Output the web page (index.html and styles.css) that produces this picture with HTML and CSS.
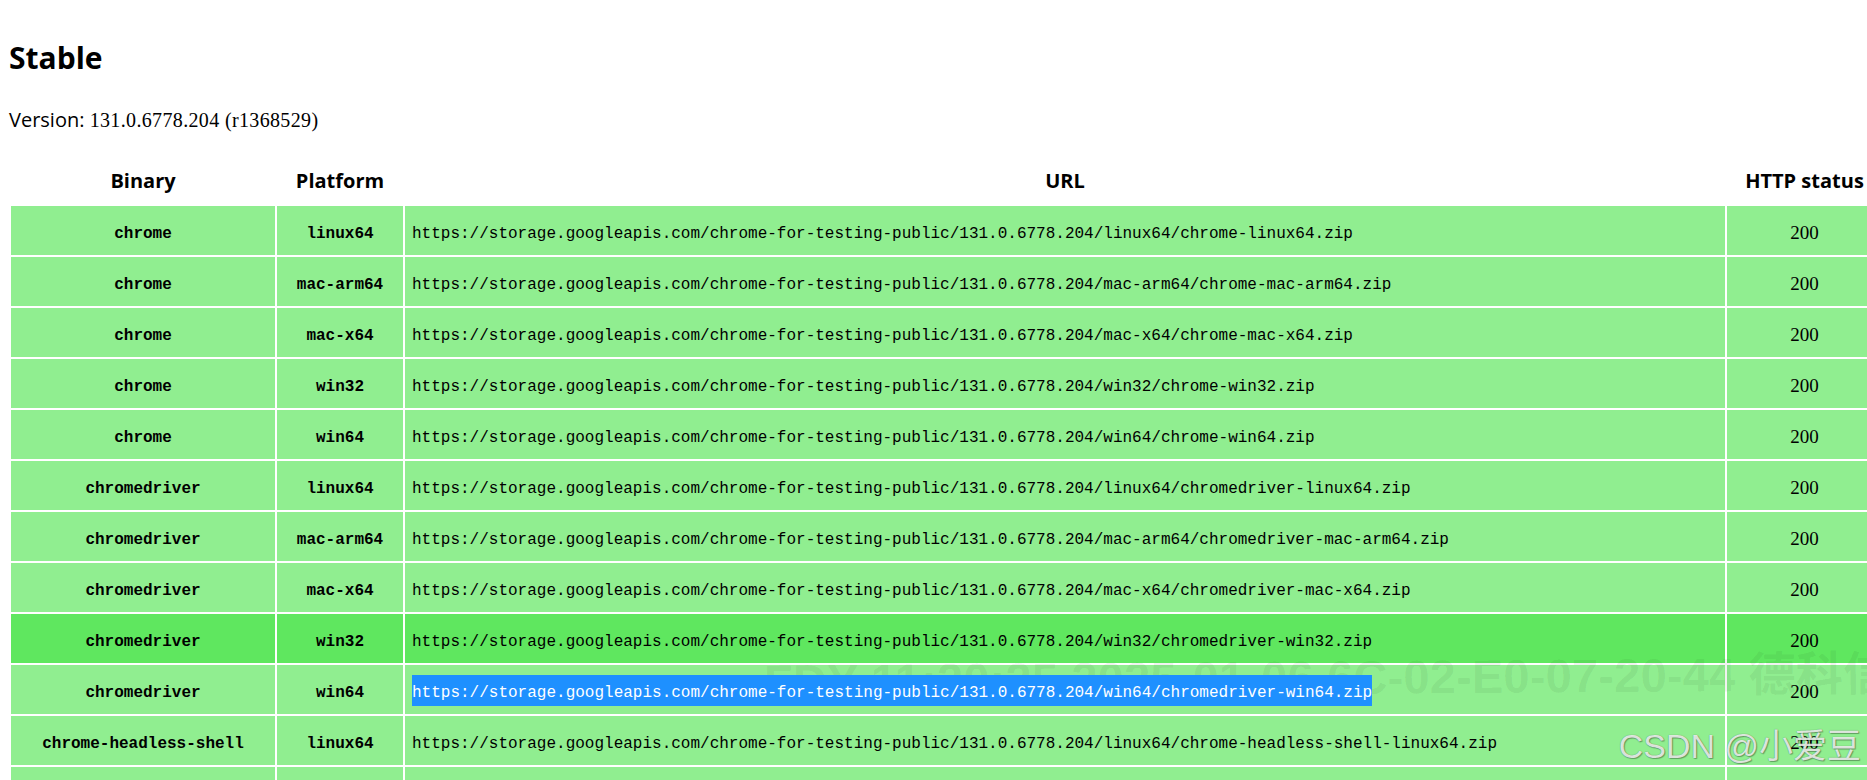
FILE: index.html
```html
<!DOCTYPE html>
<html lang="en">
<head>
<meta charset="utf-8">
<title>Chrome for Testing availability</title>
<link rel="stylesheet" href="styles.css">
</head>
<body>
<main class="page">
  <h2 class="title">Stable</h2>
  <p class="version">Version: <span class="num">131.0.6778.204 (r1368529)</span></p>
  <table class="downloads">
    <colgroup>
      <col class="c-bin">
      <col class="c-plat">
      <col class="c-url">
      <col class="c-status">
    </colgroup>
    <thead>
      <tr><th>Binary</th><th>Platform</th><th>URL</th><th>HTTP status</th></tr>
    </thead>
    <tbody>
      <tr><th class="bin">chrome</th><th class="plat">linux64</th><td class="url">https://storage.googleapis.com/chrome-for-testing-public/131.0.6778.204/linux64/chrome-linux64.zip</td><td class="status">200</td></tr>
      <tr><th class="bin">chrome</th><th class="plat">mac-arm64</th><td class="url">https://storage.googleapis.com/chrome-for-testing-public/131.0.6778.204/mac-arm64/chrome-mac-arm64.zip</td><td class="status">200</td></tr>
      <tr><th class="bin">chrome</th><th class="plat">mac-x64</th><td class="url">https://storage.googleapis.com/chrome-for-testing-public/131.0.6778.204/mac-x64/chrome-mac-x64.zip</td><td class="status">200</td></tr>
      <tr><th class="bin">chrome</th><th class="plat">win32</th><td class="url">https://storage.googleapis.com/chrome-for-testing-public/131.0.6778.204/win32/chrome-win32.zip</td><td class="status">200</td></tr>
      <tr><th class="bin">chrome</th><th class="plat">win64</th><td class="url">https://storage.googleapis.com/chrome-for-testing-public/131.0.6778.204/win64/chrome-win64.zip</td><td class="status">200</td></tr>
      <tr><th class="bin">chromedriver</th><th class="plat">linux64</th><td class="url">https://storage.googleapis.com/chrome-for-testing-public/131.0.6778.204/linux64/chromedriver-linux64.zip</td><td class="status">200</td></tr>
      <tr><th class="bin">chromedriver</th><th class="plat">mac-arm64</th><td class="url">https://storage.googleapis.com/chrome-for-testing-public/131.0.6778.204/mac-arm64/chromedriver-mac-arm64.zip</td><td class="status">200</td></tr>
      <tr><th class="bin">chromedriver</th><th class="plat">mac-x64</th><td class="url">https://storage.googleapis.com/chrome-for-testing-public/131.0.6778.204/mac-x64/chromedriver-mac-x64.zip</td><td class="status">200</td></tr>
      <tr class="hover"><th class="bin">chromedriver</th><th class="plat">win32</th><td class="url">https://storage.googleapis.com/chrome-for-testing-public/131.0.6778.204/win32/chromedriver-win32.zip</td><td class="status">200</td></tr>
      <tr><th class="bin">chromedriver</th><th class="plat">win64</th><td class="url"><span class="selected">https://storage.googleapis.com/chrome-for-testing-public/131.0.6778.204/win64/chromedriver-win64.zip</span></td><td class="status">200</td></tr>
      <tr><th class="bin">chrome-headless-shell</th><th class="plat">linux64</th><td class="url">https://storage.googleapis.com/chrome-for-testing-public/131.0.6778.204/linux64/chrome-headless-shell-linux64.zip</td><td class="status">200</td></tr>
      <tr><th class="bin">chrome-headless-shell</th><th class="plat">mac-arm64</th><td class="url">https://storage.googleapis.com/chrome-for-testing-public/131.0.6778.204/mac-arm64/chrome-headless-shell-mac-arm64.zip</td><td class="status">200</td></tr>
    </tbody>
  </table>
</main>
<div class="wm">FDY 11:20:25 2025-01-06 6C-02-E0-07-20-44 德科信息</div>
<div class="csdn">CSDN @小爱豆</div>
</body>
</html>
```
FILE: styles.css
```css
html {
  overflow: hidden;
}
body {
  margin: 0;
  background: #ffffff;
  color: #000000;
  font-family: "Open Sans", "Noto Sans", sans-serif;
  font-size: 20px;
}
.page {
  padding: 40px 0 0 9px;
}
.title {
  margin: 0;
  font-size: 30px;
  line-height: 36px;
  font-weight: 700;
}
.version {
  margin: 30px 0 0;
  line-height: 28px;
}
.num {
  font-family: "Liberation Serif", serif;
  letter-spacing: 0.35px;
}
.downloads {
  margin-top: 19px;
  border-spacing: 2px;
  table-layout: fixed;
  width: 1875px;
}
.c-bin { width: 264px; }
.c-plat { width: 126px; }
.c-url { width: 1320px; }
.c-status { width: 155px; }

.downloads th,
.downloads td {
  box-sizing: border-box;
  height: 49px;
  line-height: 28px;
  vertical-align: middle;
  white-space: nowrap;
}
.downloads thead th {
  padding: 2px 0 0;
  font-size: 20px;
  font-weight: 700;
  text-align: center;
}
.downloads tbody th,
.downloads tbody td {
  background: #90ee90;
  padding: 6px 0 0;
}
.downloads tbody tr.hover > * {
  background: #5fe75f;
}
.bin,
.plat {
  font-family: "Liberation Mono", monospace;
  font-size: 16px;
  font-weight: 700;
  text-align: center;
}
.downloads tbody td.url {
  font-family: "Liberation Mono", monospace;
  font-size: 16px;
  text-align: left;
  padding-left: 7px;
}
.downloads tbody td.status {
  font-family: "Liberation Serif", serif;
  font-size: 19px;
  text-align: center;
  padding-top: 4px;
}
.selected {
  position: relative;
  z-index: 2;
  background: #1e90ff;
  color: #ffffff;
  padding: 9px 0 4px;
}
.wm {
  position: absolute;
  z-index: 1;
  left: 764px;
  top: 658px;
  font-family: "Liberation Sans", "Noto Sans CJK SC", sans-serif;
  font-weight: 700;
  font-size: 47px;
  line-height: 47px;
  letter-spacing: 0.2px;
  color: rgba(30, 60, 30, 0.08);
  white-space: nowrap;
  transform: rotate(-0.4deg);
  transform-origin: left center;
  pointer-events: none;
}
.csdn {
  position: absolute;
  z-index: 3;
  right: 6px;
  top: 729px;
  font-family: "Liberation Sans", "Noto Sans CJK SC", sans-serif;
  font-size: 34px;
  line-height: 34px;
  color: rgba(255, 255, 255, 0.82);
  text-shadow: 0 0 1px rgba(0, 0, 0, 0.45), 1px 1px 1px rgba(0, 0, 0, 0.3);
  white-space: nowrap;
  pointer-events: none;
}
```
